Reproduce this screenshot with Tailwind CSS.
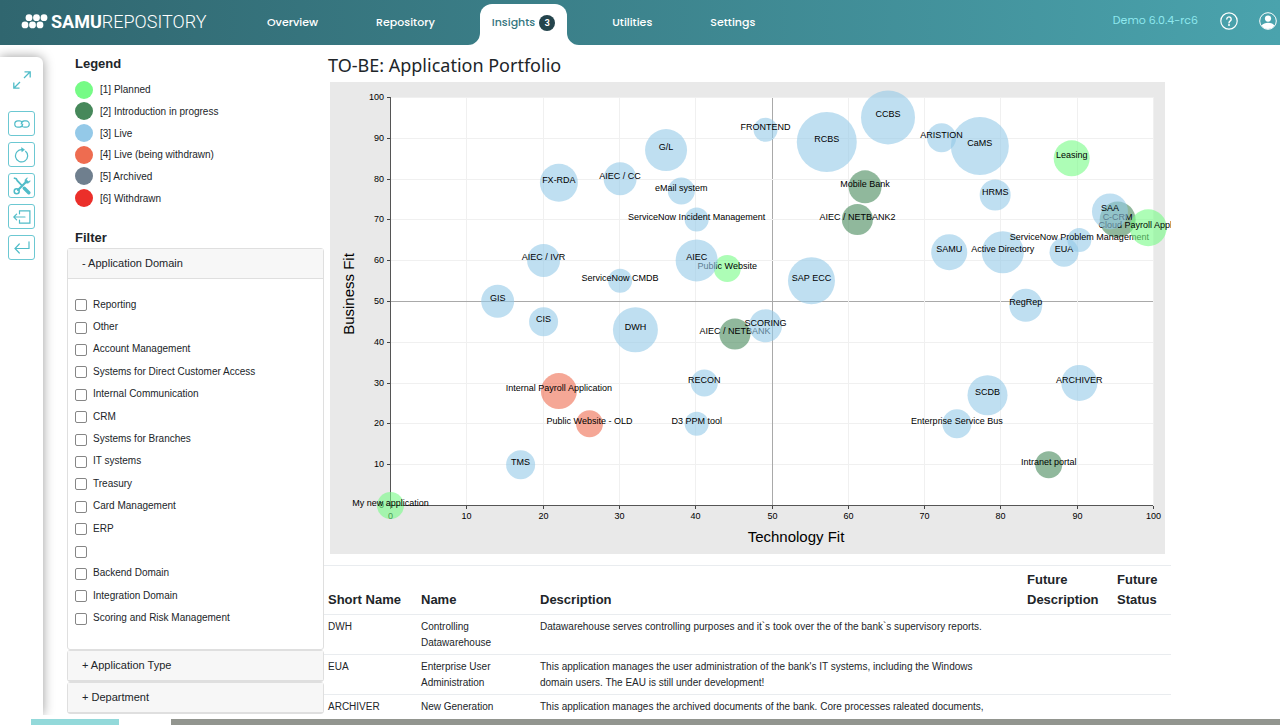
<!DOCTYPE html>
<html lang="en">
<head>
  <meta charset="UTF-8">
  <meta name="viewport" content="width=device-width, initial-scale=1.0">
  <title>SAMU Repository - Application Portfolio</title>
  <script src="https://cdn.jsdelivr.net/npm/@tailwindcss/browser@4"></script>
</head>

<body class="h-screen flex flex-col overflow-hidden bg-white text-[#212529] font-['Liberation_Sans',Arial,sans-serif]">

  <!-- Header -->
  <header class="h-[45px] shrink-0 flex items-center bg-gradient-to-r from-[#30666f] to-[#4aa3ad] text-white text-[11px] font-medium font-[Poppins,Inter,sans-serif]">
    <a href="#" class="w-[238px] shrink-0 pl-[21px] pb-0.5 flex items-center gap-[3px]" aria-label="SAMU Repository">
      <svg width="27" height="15" viewBox="0 0 27 15" fill="#fff">
        <circle cx="8" cy="3.7" r="3.4"/><circle cx="15.5" cy="3.7" r="3.4"/><circle cx="23" cy="3.7" r="3.4"/>
        <circle cx="4" cy="10.9" r="3.4"/><circle cx="11.5" cy="10.9" r="3.4"/><circle cx="19" cy="10.9" r="3.4"/>
      </svg>
      <span class="text-[18px] leading-5 font-[Roboto,sans-serif] font-light"><b class="font-bold">SAMU</b>REPOSITORY</span>
    </a>
    <nav class="flex h-full items-center">
      <a href="#" class="px-[29px]">Overview</a>
      <a href="#" class="px-[29px]">Repository</a>
      <a href="#" class="relative mx-4 mt-1 h-[41px] px-3 flex items-center gap-1 rounded-t-xl bg-white text-[#357680]">
        <svg class="absolute bottom-0 -left-3" width="12" height="12" viewBox="0 0 12 12" fill="#fff"><path d="M12 0v12H0A12 12 0 0 0 12 0Z"/></svg>
        <svg class="absolute bottom-0 -right-3" width="12" height="12" viewBox="0 0 12 12" fill="#fff"><path d="M0 0v12h12A12 12 0 0 1 0 0Z"/></svg>
        <span class="-mt-1">Insights</span>
        <span class="-mt-1 size-4 rounded-full bg-[#24444c] text-white text-[9px] leading-4 text-center font-semibold">3</span>
      </a>
      <a href="#" class="px-[29px]">Utilities</a>
      <a href="#" class="px-[29px]">Settings</a>
    </nav>
    <div class="ml-auto pr-[3px] pb-1 flex items-center">
      <span class="text-[#8ee8ee] font-normal">Demo 6.0.4-rc6</span>
      <button type="button" class="ml-[22px]" aria-label="Help">
        <svg width="18" height="18" viewBox="0 0 18 18" fill="none" stroke="#fff" stroke-width="1.2" stroke-linecap="round"><circle cx="9" cy="9" r="8.2"/><path d="M6.8 7.1a2.2 2.2 0 1 1 3.5 1.8c-.8.6-1.3 1-1.3 2" stroke-width="1.4"/><circle cx="9" cy="13.1" r=".4" fill="#fff"/></svg>
      </button>
      <button type="button" class="ml-[21px]" aria-label="Account">
        <svg width="18" height="18" viewBox="0 0 18 18"><circle cx="9" cy="9" r="8.3" fill="none" stroke="#fff" stroke-width="1"/><circle cx="9" cy="6.6" r="3.1" fill="#fff"/><path d="M2.6 13.4c1.4-1.8 3.7-2.6 6.4-2.6s5 .8 6.4 2.6A7.8 7.8 0 0 1 9 17a7.8 7.8 0 0 1-6.4-3.6Z" fill="#fff"/></svg>
      </button>
    </div>
  </header>

  <div class="flex-1 min-h-0 flex overflow-hidden">

    <!-- Toolbar -->
    <aside class="mt-3 w-[43px] shrink-0 pt-3.5 flex flex-col items-center gap-1.5 rounded-tr-md bg-white shadow-[0_0_12px_rgba(0,0,0,0.4)] text-[#50bcc8]">
      <button type="button" class="mb-4 h-[18px]" aria-label="Expand">
        <svg width="18" height="18" viewBox="0 0 18 18" fill="none" stroke="currentColor" stroke-width="1.3"><path d="M11 7l6-6M11.5.8h5.700v5.700M7 11l-6 6M.8 11.500v5.700h5.700"/></svg>
      </button>
      <button type="button" class="w-[27px] h-[25px] flex items-center justify-center border border-[#6cc8d2] rounded-[3px]" aria-label="Copy link">
        <svg width="16" height="8" viewBox="0 0 16 8" fill="none" stroke="currentColor" stroke-width="1.2" stroke-linecap="round"><path d="M8.200 2.200C7.600 1.200 6.700.8 5.600.8H3.900a3.100 3.100 0 0 0 0 6.300h1.700A3.200 3.200 0 0 0 8.700 4M7.800 5.700c.6 1 1.500 1.500 2.600 1.500h1.700a3.100 3.100 0 0 0 0-6.300h-1.700A3.200 3.200 0 0 0 7.300 4"/></svg>
      </button>
      <button type="button" class="w-[27px] h-[25px] flex items-center justify-center border border-[#6cc8d2] rounded-[3px]" aria-label="Reload">
        <svg width="15" height="16" viewBox="0 0 15 16" fill="none" stroke="currentColor" stroke-width="1.2"><path d="M11.300 4A6.100 6.100 0 1 1 8.500 2.800"/><path d="M7.500.6 10.600 2.800 7.800 4.800Z" fill="currentColor" stroke-width=".5"/></svg>
      </button>
      <button type="button" class="w-[27px] h-[25px] flex items-center justify-center border border-[#6cc8d2] rounded-[3px]" aria-label="Tools">
        <svg width="18" height="18" viewBox="0 0 18 18" fill="none" stroke="currentColor" stroke-linecap="round"><path d="M1.500 1.200l1.700.5 1.100 2L9 8.600" stroke-width="1.700"/><path d="M11.300 11.300l4.500 4.500" stroke-width="3.400"/><path d="M5 13l8-8" stroke-width="2.200"/><circle cx="3.700" cy="14.300" r="2.500" stroke-width="1.500"/><path d="M14.200.9a3 3 0 0 0-1.800 4.600 3 3 0 0 0 4.800-1.700l-1.800.8L13.600 3Z" fill="currentColor" stroke-width=".6"/></svg>
      </button>
      <button type="button" class="w-[27px] h-[25px] flex items-center justify-center border border-[#6cc8d2] rounded-[3px]" aria-label="Export">
        <svg width="18" height="14" viewBox="0 0 18 14" fill="none" stroke="currentColor" stroke-width="1.2" stroke-linecap="round"><path d="M6.500 3.800V.8h10.400v12.400H6.500v-3M1 7h11M3.600 4.200.8 7l2.800 2.800"/></svg>
      </button>
      <button type="button" class="w-[27px] h-[25px] flex items-center justify-center border border-[#6cc8d2] rounded-[3px]" aria-label="Back">
        <svg width="16" height="13" viewBox="0 0 16 13" fill="none" stroke="currentColor" stroke-width="1.200" stroke-linecap="round"><path d="M15 .8v6.700H1M5.300 3 1 7.500 5.300 12"/></svg>
      </button>
    </aside>

    <!-- Legend and filter -->
    <section class="ml-6 w-[257px] shrink-0 pt-[9px]">
      <h2 class="pl-2 text-[13px] leading-5 font-bold">Legend</h2>
      <ul class="mt-[5px] pl-2 h-[130px] grid auto-rows-fr text-[10px]">
        <li class="flex items-center gap-[7px]"><span class="size-[18px] rounded-full bg-[#76fb86]"></span>[1] Planned</li>
        <li class="flex items-center gap-[7px]"><span class="size-[18px] rounded-full bg-[#46885a]"></span>[2] Introduction in progress</li>
        <li class="flex items-center gap-[7px]"><span class="size-[18px] rounded-full bg-[#94c9e8]"></span>[3] Live</li>
        <li class="flex items-center gap-[7px]"><span class="size-[18px] rounded-full bg-[#ee6c50]"></span>[4] Live (being withdrawn)</li>
        <li class="flex items-center gap-[7px]"><span class="size-[18px] rounded-full bg-[#6f7f8e]"></span>[5] Archived</li>
        <li class="flex items-center gap-[7px]"><span class="size-[18px] rounded-full bg-[#eb2f2a]"></span>[6] Withdrawn</li>
      </ul>

      <h2 class="mt-[19px] pl-2 text-[13px] leading-5 font-bold">Filter</h2>
      <div class="border border-[#dfdfdf] rounded-[3px]">
        <button type="button" class="block w-full h-[30px] pl-3.5 border-b border-[#dfdfdf] bg-[#f7f7f7] text-left text-[11px]">- Application Domain</button>
        <div class="pt-3.5 pb-5 pl-[7px] h-[370px] grid auto-rows-fr text-[10px]">
          <label class="flex items-center gap-1.5"><input type="checkbox" class="mt-0.5 size-3 appearance-none border border-[#868686] rounded-[2px] bg-white checked:bg-[#50bcc8]">Reporting</label>
          <label class="flex items-center gap-1.5"><input type="checkbox" class="mt-0.5 size-3 appearance-none border border-[#868686] rounded-[2px] bg-white checked:bg-[#50bcc8]">Other</label>
          <label class="flex items-center gap-1.5"><input type="checkbox" class="mt-0.5 size-3 appearance-none border border-[#868686] rounded-[2px] bg-white checked:bg-[#50bcc8]">Account Management</label>
          <label class="flex items-center gap-1.5"><input type="checkbox" class="mt-0.5 size-3 appearance-none border border-[#868686] rounded-[2px] bg-white checked:bg-[#50bcc8]">Systems for Direct Customer Access</label>
          <label class="flex items-center gap-1.5"><input type="checkbox" class="mt-0.5 size-3 appearance-none border border-[#868686] rounded-[2px] bg-white checked:bg-[#50bcc8]">Internal Communication</label>
          <label class="flex items-center gap-1.5"><input type="checkbox" class="mt-0.5 size-3 appearance-none border border-[#868686] rounded-[2px] bg-white checked:bg-[#50bcc8]">CRM</label>
          <label class="flex items-center gap-1.5"><input type="checkbox" class="mt-0.5 size-3 appearance-none border border-[#868686] rounded-[2px] bg-white checked:bg-[#50bcc8]">Systems for Branches</label>
          <label class="flex items-center gap-1.5"><input type="checkbox" class="mt-0.5 size-3 appearance-none border border-[#868686] rounded-[2px] bg-white checked:bg-[#50bcc8]">IT systems</label>
          <label class="flex items-center gap-1.5"><input type="checkbox" class="mt-0.5 size-3 appearance-none border border-[#868686] rounded-[2px] bg-white checked:bg-[#50bcc8]">Treasury</label>
          <label class="flex items-center gap-1.5"><input type="checkbox" class="mt-0.5 size-3 appearance-none border border-[#868686] rounded-[2px] bg-white checked:bg-[#50bcc8]">Card Management</label>
          <label class="flex items-center gap-1.5"><input type="checkbox" class="mt-0.5 size-3 appearance-none border border-[#868686] rounded-[2px] bg-white checked:bg-[#50bcc8]">ERP</label>
          <label class="flex items-center gap-1.5"><input type="checkbox" aria-label="No domain" class="mt-0.5 size-3 appearance-none border border-[#868686] rounded-[2px] bg-white checked:bg-[#50bcc8]"></label>
          <label class="flex items-center gap-1.5"><input type="checkbox" class="mt-0.5 size-3 appearance-none border border-[#868686] rounded-[2px] bg-white checked:bg-[#50bcc8]">Backend Domain</label>
          <label class="flex items-center gap-1.5"><input type="checkbox" class="mt-0.5 size-3 appearance-none border border-[#868686] rounded-[2px] bg-white checked:bg-[#50bcc8]">Integration Domain</label>
          <label class="flex items-center gap-1.5"><input type="checkbox" class="mt-0.5 size-3 appearance-none border border-[#868686] rounded-[2px] bg-white checked:bg-[#50bcc8]">Scoring and Risk Management</label>
        </div>
      </div>
      <div class="border border-[#dfdfdf] rounded-[3px]">
        <button type="button" class="block w-full h-[30px] pl-3.5 border-b border-[#dfdfdf] bg-[#f7f7f7] text-left text-[11px]">+ Application Type</button>
      </div>
      <div class="border border-[#dfdfdf] rounded-[3px]">
        <button type="button" class="block w-full h-[30px] pl-3.5 border-b border-[#dfdfdf] bg-[#f7f7f7] text-left text-[11px]">+ Department</button>
      </div>
    </section>

    <!-- Portfolio -->
    <main class="flex-1 min-w-0 mr-[109px]">
      <h1 class="h-[37px] pl-1 text-[18px] leading-10 font-['Noto_Sans',sans-serif]">TO-BE: Application Portfolio</h1>
      <div class="pl-1.5">
        <svg id="chart" class="block w-full h-auto" viewBox="0 0 841 472" font-size="9" text-anchor="middle" fill="#000">
          <rect width="835" height="472" fill="#e9e9e9"/>
          <rect x="60" y="15" width="763" height="409" fill="#fff"/>
          <g id="axes"></g>
          <text x="466" y="460" font-size="15">Technology Fit</text>
          <text transform="translate(24 212) rotate(-90)" font-size="15">Business Fit</text>
          <g id="bubbles"></g>
        </svg>
      </div>

      <table class="mt-[11px] w-full table-fixed text-left text-[10px] leading-4">
        <thead class="text-[13px] leading-5">
          <tr class="border-y border-[#e9ecef] align-bottom">
            <th class="w-[93px] px-1 pt-1 pb-1">Short Name</th>
            <th class="w-[119px] px-1 pt-1 pb-1">Name</th>
            <th class="px-1 pt-1 pb-1">Description</th>
            <th class="w-[90px] px-1 pt-1 pb-1">Future Description</th>
            <th class="w-[58px] px-1 pt-1 pb-1">Future Status</th>
          </tr>
        </thead>
        <tbody>
          <tr class="border-b border-[#e9ecef] align-top">
            <td class="px-1 pt-1 pb-[3px]">DWH</td>
            <td class="px-1 pt-1 pb-[3px]">Controlling<br>Datawarehouse</td>
            <td class="px-1 pt-1 pb-[3px]">Datawarehouse serves controlling purposes and it`s took over the of the bank`s supervisory reports.</td>
            <td></td>
            <td></td>
          </tr>
          <tr class="border-b border-[#e9ecef] align-top">
            <td class="px-1 pt-1 pb-[3px]">EUA</td>
            <td class="px-1 pt-1 pb-[3px]">Enterprise User<br>Administration</td>
            <td class="px-1 pt-1 pb-[3px]">This application manages the user administration of the bank's IT systems, including the Windows<br>domain users. The EAU is still under development!</td>
            <td></td>
            <td></td>
          </tr>
          <tr class="align-top">
            <td class="px-1 pt-1 pb-[3px]">ARCHIVER</td>
            <td class="px-1 pt-1 pb-[3px]">New Generation</td>
            <td class="px-1 pt-1 pb-[3px]">This application manages the archived documents of the bank. Core processes raleated documents,</td>
            <td></td>
            <td></td>
          </tr>
        </tbody>
      </table>
    </main>
  </div>

  <!-- Bottom strip -->
  <footer class="h-2.5 shrink-0 pt-1 pl-[31px] flex bg-white">
    <div class="w-[88px] bg-[#93d9da]"></div>
    <div class="ml-[52px] flex-1 bg-[#92958f]"></div>
  </footer>

  <script>
    const planned = '#76fb86', intro = '#46885a', live = '#94c9e8', leaving = '#ee6c50';

    // name, technology fit, business fit, radius, status; later ones lie on top
    const apps = [
      ['My new application', 0, 0, 13.5, planned],
      ['G/L', 36, 87, 21, live],
      ['FX-RDA', 22, 79, 19, live],
      ['AIEC / CC', 30, 80, 16.5, live],
      ['eMail system', 38, 77, 13.5, live],
      ['ServiceNow Incident Management', 40, 70, 12, live],
      ['AIEC / IVR', 20, 60, 16.5, live],
      ['Public Website', 44, 58, 13.5, planned],
      ['AIEC', 40, 60, 21, live],
      ['ServiceNow CMDB', 30, 55, 12, live],
      ['GIS', 14, 50, 16.5, live],
      ['CIS', 20, 45, 14.5, live],
      ['DWH', 32, 43, 22.5, live],
      ['AIEC / NETBANK', 45, 42, 15.5, intro],
      ['SCORING', 49, 44, 16.5, live],
      ['RECON', 41, 30, 13.5, live],
      ['D3 PPM tool', 40, 20, 12, live],
      ['Internal Payroll Application', 22, 28, 18, leaving],
      ['Public Website - OLD', 26, 20, 13.5, leaving],
      ['TMS', 17, 10, 14.5, live],
      ['FRONTEND', 49, 92, 12, live],
      ['RCBS', 57, 89, 30, live],
      ['CCBS', 65, 95, 27, live],
      ['CaMS', 77, 88, 29, live],
      ['ARISTION', 72, 90, 14.5, live],
      ['Leasing', 89, 85, 18, planned],
      ['Mobile Bank', 62, 78, 16.5, intro],
      ['AIEC / NETBANK2', 61, 70, 15.5, intro],
      ['HRMS', 79, 76, 15.5, live],
      ['SAMU', 73, 62, 18, live],
      ['Active Directory', 80, 62, 21, live],
      ['EUA', 88, 62, 14.5, live],
      ['C-CRM', 95, 70, 18, intro],
      ['ServiceNow Problem Management', 90, 65, 12, live],
      ['Cloud Payroll Application', 99, 68, 18.5, planned],
      ['SAA', 94, 72, 18, live],
      ['SAP ECC', 55, 55, 23.5, live],
      ['RegRep', 83, 49, 16.5, live],
      ['SCDB', 78, 27, 20, live],
      ['ARCHIVER', 90, 30, 18, live],
      ['Enterprise Service Bus', 74, 20, 14.5, live],
      ['Intranet portal', 86, 10, 13.5, intro]
    ];

    let axes = '';
    for (let v = 0; v <= 100; v += 10) {
      const x = Math.round(60 + v * 7.63) + 0.5;
      const y = Math.round(423 - v * 4.08) + 0.5;
      const line = v === 50 ? '#a9a9a9' : '#f0f0f0';
      axes += `<path d="M${x} 15V424" stroke="${line}"/><path d="M60 ${y}H823" stroke="${line}"/>`;
      axes += `<path d="M${x} 424v3M57 ${y}h3" stroke="#444"/>`;
      axes += `<text x="${x}" y="437">${v}</text><text x="54" y="${y + 2}" text-anchor="end">${v}</text>`;
    }
    axes += '<path d="M60.5 15V423.5H823" fill="none" stroke="#555"/>';
    document.getElementById('axes').innerHTML = axes;

    document.getElementById('bubbles').innerHTML = apps.map(([name, tech, business, r, color]) => {
      const x = 60.5 + tech * 7.654;
      const y = 423.5 - business * 4.085;
      return `<circle cx="${x}" cy="${y}" r="${r}" fill="${color}" fill-opacity="0.6"/><text x="${x}" y="${y}">${name}</text>`;
    }).join('');
  </script>
</body>
</html>
